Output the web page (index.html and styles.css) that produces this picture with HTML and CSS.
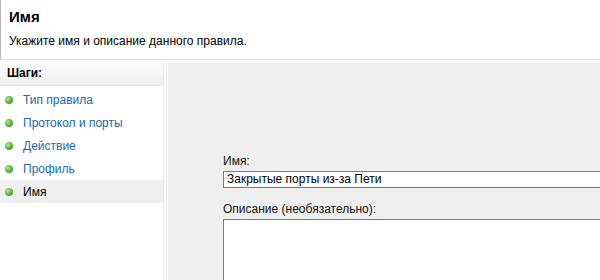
FILE: index.html
```html
<!DOCTYPE html>
<html lang="ru">
<head>
  <meta charset="UTF-8">
  <title>Имя</title>
  <link rel="stylesheet" href="styles.css">
</head>
<body>

<header class="top">
  <h1>Имя</h1>
  <p>Укажите имя и описание данного правила.</p>
</header>

<div class="main">
  <!-- Steps list -->
  <div class="steps">
    <div class="steps-title">Шаги:</div>
    <ul>
      <li><span class="dot"></span><a href="#">Тип правила</a></li>
      <li><span class="dot"></span><a href="#">Протокол и порты</a></li>
      <li><span class="dot"></span><a href="#">Действие</a></li>
      <li><span class="dot"></span><a href="#">Профиль</a></li>
      <li class="current"><span class="dot"></span>Имя</li>
    </ul>
  </div>

  <!-- Form -->
  <div class="form">
    <label for="name">Имя:</label>
    <input id="name" type="text" value="Закрытые порты из-за Пети">
    <label for="desc">Описание (необязательно):</label>
    <textarea id="desc"></textarea>
  </div>
</div>

</body>
</html>
```

FILE: styles.css
```css
body {
  font-family: "Liberation Sans", Arial, sans-serif;
  font-size: 12px;
  color: #000;
  margin: 0;
  width: 600px;
  height: 280px;
  overflow: hidden;
  background: #fff;
}
.top {
  height: 60px;
  padding: 0 8px;
  border-left: 1px solid #b4b4b4;
  border-bottom: 1px solid #e2e2e2;
  box-sizing: border-box;
}
.top h1 {
  margin: 0;
  padding-top: 7px;
  font-size: 15px;
  line-height: 20px;
}
.top p {
  margin: 5px 0 0;
  line-height: 18px;
}
.main {
  display: flex;
  height: 219px;
  padding-top: 2px;
}
.steps {
  width: 163px;
  border-right: 1px solid #e6e6e6;
  box-shadow: 2px 0 0 #fff, 3px 0 0 #e8e8e8;
  margin-right: 4px;
  flex-shrink: 0;
}
.steps-title {
  height: 23px;
  line-height: 23px;
  padding-left: 7px;
  font-weight: bold;
  background: linear-gradient(#fff, #eeeeee);
  border-bottom: 1px solid #e8e8e8;
}
.steps ul {
  list-style: none;
  margin: 2px 0 0;
  padding: 0;
}
.steps li {
  display: flex;
  align-items: center;
  height: 23px;
  padding-left: 5px;
}
.steps li.current {
  background: #efefef;
}
.steps a {
  color: #1c6aa3;
  text-decoration: none;
}
.dot {
  width: 8px;
  height: 8px;
  border-radius: 50%;
  margin-right: 10px;
  background: radial-gradient(circle at 35% 35%, #b6ec8e 0, #5cbf3a 45%, #2f8a1c 100%);
}
.form {
  flex: 1;
  background: #efefef;
  padding: 92px 0 0 55px;
  display: flex;
  flex-direction: column;
  overflow: hidden;
}
.form label {
  line-height: 14px;
  color: #111;
}
.form input, .form textarea {
  font-family: inherit;
  font-size: 12px;
  width: 420px;
  border: 1px solid #7a7a7a;
  background: #fff;
  box-sizing: border-box;
  margin: 3px 0 0;
  outline: none;
}
.form input {
  height: 21px;
  padding: 0 3px;
  margin-bottom: 14px;
}
.form textarea {
  height: 80px;
  resize: none;
}
```
